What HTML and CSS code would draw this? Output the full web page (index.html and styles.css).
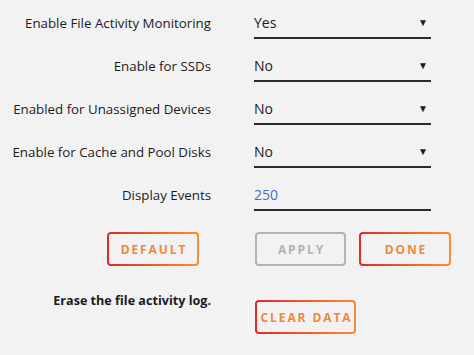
FILE: index.html
```html
<!DOCTYPE html>
<html lang="en">
<head>
    <meta charset="UTF-8">
    <meta name="viewport" content="width=device-width, initial-scale=1.0">
    <title>File Activity</title>
    <link rel="stylesheet" href="styles.css">
</head>
<body>
    <form class="settings">
        <div class="row">
            <label class="label">Enable File Activity Monitoring</label>
            <div class="field select"><span>Yes</span><span class="caret">&#9660;</span></div>
        </div>
        <div class="row">
            <label class="label">Enable for SSDs</label>
            <div class="field select"><span>No</span><span class="caret">&#9660;</span></div>
        </div>
        <div class="row">
            <label class="label">Enabled for Unassigned Devices</label>
            <div class="field select"><span>No</span><span class="caret">&#9660;</span></div>
        </div>
        <div class="row">
            <label class="label">Enable for Cache and Pool Disks</label>
            <div class="field select"><span>No</span><span class="caret">&#9660;</span></div>
        </div>
        <div class="row">
            <label class="label">Display Events</label>
            <div class="field input">250</div>
        </div>

        <div class="row actions">
            <div class="label"><button type="button" class="btn">Default</button></div>
            <div class="btn-group">
                <button type="button" class="btn disabled">Apply</button>
                <button type="button" class="btn">Done</button>
            </div>
        </div>

        <div class="row erase">
            <div class="label strong">Erase the file activity log.</div>
            <div><button type="button" class="btn wide">Clear Data</button></div>
        </div>
    </form>
</body>
</html>
```

FILE: styles.css
```css
body {
  margin: 0;
  background: #f2f2f2;
  font-family: "Open Sans", "Noto Sans", sans-serif;
  color: #1c1c1c;
}

.settings {
  padding-top: 7px;
  display: flex;
  flex-direction: column;
  gap: 11px;
}

.row {
  display: grid;
  grid-template-columns: 211px auto;
  column-gap: 43px;
  align-items: center;
}

.label {
  text-align: right;
  font-size: 13.3px;
}

.label.strong {
  font-weight: 700;
  font-size: 12.6px;
}

.field {
  width: 177px;
  height: 32px;
  border-bottom: 2px solid #2b2b2b;
  display: flex;
  align-items: center;
  justify-content: space-between;
  font-size: 14px;
  box-sizing: border-box;
}

.caret {
  font-size: 10px;
  margin-right: 3px;
}

.field.input {
  color: #486dba;
}

.actions {
  margin-top: 10px;
}

.actions .label {
  padding-right: 12px;
  display: flex;
  justify-content: flex-end;
}

.btn-group {
  display: flex;
  gap: 13px;
  padding-left: 1px;
}

.btn {
  flex-shrink: 0;
  width: 92px;
  height: 34px;
  border: 2px solid transparent;
  border-radius: 4px;
  background:
    linear-gradient(#f2f2f2, #f2f2f2) padding-box,
    linear-gradient(90deg, #e22828, #ff8c2f) border-box;
  color: #f0883e;
  font-family: "Open Sans", sans-serif;
  font-weight: 700;
  font-size: 12px;
  letter-spacing: 1.9px;
  text-transform: uppercase;
  padding: 0 0 0 2px;
  cursor: pointer;
}

.btn.disabled {
  width: 91px;
  background: #f2f2f2;
  border-color: #b3b3b3;
  color: #b3b3b3;
}

.btn.wide {
  width: 101px;
  margin-left: 1px;
}

.erase {
  margin-top: 23px;
  align-items: start;
}

.erase .label {
  margin-top: -8px;
}
```
